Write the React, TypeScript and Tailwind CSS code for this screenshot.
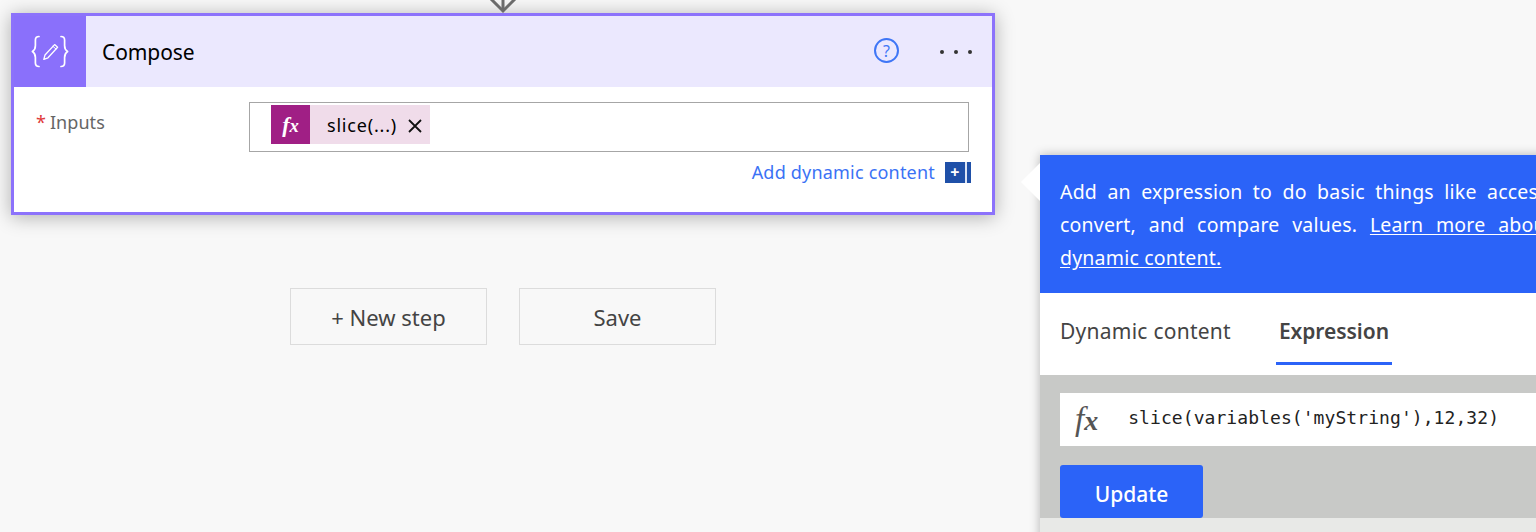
const sans = "font-['Noto_Sans','Open_Sans',sans-serif]";

const FxGlyph = ({ className }: { className: string }) => (
  <span className={`font-['Liberation_Serif',serif] italic leading-none ${className}`}>
    f<span className="text-[0.85em] font-bold">x</span>
  </span>
);

const ComposeIcon = () => (
  <svg width="38" height="33" viewBox="0 0 38 33" fill="none" stroke="white" strokeWidth="1.7" strokeLinecap="round" strokeLinejoin="round">
    <path d="M8 1.5c-3 0-3.6 1.3-3.6 3.4v5.6c0 2.6-.9 4.8-3 6 2.1 1.2 3 3.4 3 6v5.6c0 2.1.6 3.4 3.6 3.4" />
    <path d="M30 1.5c3 0 3.6 1.3 3.6 3.4v5.6c0 2.6.9 4.8 3 6-2.1 1.2-3 3.4-3 6v5.6c0 2.1-.6 3.4-3.6 3.4" />
    <path d="M23.6 9.6l3 2.6-9.6 10.6-4.2 1.6 1.2-4.4z" strokeWidth="1.3" />
    <path d="M22 11.4l3 2.6" strokeWidth="1" />
  </svg>
);

const ConnectorArrow = () => (
  <svg width="30" height="14" viewBox="0 0 30 14" fill="none" stroke="#6b6b6b" strokeWidth="3" className="absolute left-[488px] top-0">
    <path d="M15 -4v15" />
    <path d="M3 -1l12 12 12-12" />
  </svg>
);

const Card = () => (
  <div className="w-[984px] h-[202px] border-[3px] border-[#8c72fb] bg-white shadow-[0_2px_18px_rgba(0,0,0,0.3)]">
    <div className="h-[71px] bg-[#ebe8fe] flex items-center">
      <div className="w-[72px] h-full bg-[#8a70fb] flex items-center justify-center">
        <ComposeIcon />
      </div>
      <div className="ml-4 text-[21px] leading-[28px] text-black tracking-[-0.1px] flex-1">Compose</div>
      <div className="w-[25px] h-[25px] rounded-full border-2 border-[#3f76f6] text-[#3f76f6] text-[16px] leading-none flex items-center justify-center mr-[41px] mb-[2px]">
        ?
      </div>
      <div className="flex gap-[10px] mr-[20px]">
        <span className="w-[4px] h-[4px] rounded-full bg-[#333]" />
        <span className="w-[4px] h-[4px] rounded-full bg-[#333]" />
        <span className="w-[4px] h-[4px] rounded-full bg-[#333]" />
      </div>
    </div>
    <div className="flex pt-[15px] pl-[22px]">
      <div className="w-[213px] flex items-start text-[18px] leading-[24px] text-[#666] pt-[8px] tracking-[0.05px]">
        <span className="text-[#e03a3a] mr-[4px]">*</span>
        Inputs
      </div>
      <div className="w-[720px]">
        <div className="h-[50px] border border-[#a6a6a6] pl-[21px] pt-[2px]">
          <div className="inline-flex h-[39px] bg-[#f0dcea] items-center pr-[8px]">
            <div className="w-[39px] h-full bg-[#a01f85] flex items-center justify-center text-white">
              <FxGlyph className="text-[22px] font-bold" />
            </div>
            <span className="ml-[17px] text-[18px] text-black tracking-[0.8px] mt-[1px]">slice(...)</span>
            <svg width="14" height="14" viewBox="0 0 14 14" stroke="#111" strokeWidth="1.8" className="ml-[11px] mt-[2px]">
              <path d="M1 1l12 12M13 1L1 13" />
            </svg>
          </div>
        </div>
        <div className="flex justify-end items-center mt-[8px] mr-[-2px] text-[#3b72f5] text-[18px] tracking-[0.2px] leading-[24px]">
          Add dynamic content
          <div className="ml-[10px] flex h-[21px] bg-[#1f50a8]">
            <div className="w-[20px] flex items-center justify-center text-white text-[16px] font-bold leading-none">+</div>
            <div className="w-[2px] bg-[#dbe4f5]" />
            <div className="w-[4px]" />
          </div>
        </div>
      </div>
    </div>
  </div>
);

const StepButton = ({ label }: { label: string }) => (
  <button className="w-[197px] h-[57px] border border-[#dcdcdc] text-[#444] text-[22px] leading-[30px] flex items-center justify-center">
    {label}
  </button>
);

const ExpressionPanel = () => (
  <div className="absolute left-[1040px] top-[155px] w-[560px] h-[400px] bg-white shadow-[0_0_10px_rgba(0,0,0,0.28)]">
    <div className="absolute left-[-19px] top-[8px] w-0 h-0 border-y-[19px] border-y-transparent border-r-[19px] border-r-white" />
    <div className="h-[138px] bg-[#2b63f8] text-white text-[19.5px] tracking-[0.2px] leading-[33px] pl-[20px] pr-[47px] pt-[20px] text-justify">
      Add an expression to do basic things like access, convert, and compare values.{" "}
      <span className="underline underline-offset-2">Learn more about dynamic content.</span>
    </div>
    <div className="h-[82px] flex pl-[20px] text-[21px] tracking-[0.25px] text-[#444]">
      <div className="pt-[23px]">Dynamic content</div>
      <div className="ml-[45px] h-[72px] pt-[23px] px-[3px] font-semibold tracking-[-0.05px] border-b-[3px] border-[#2b63f8]">Expression</div>
    </div>
    <div className="h-[143px] bg-[#c8c9c7] pt-[18px] pl-[20px]">
      <div className="h-[53px] bg-white flex items-center pl-[15px]">
        <FxGlyph className="text-[33px] text-[#555]" />
        <span className="ml-[30px] font-['DejaVu_Sans_Mono',monospace] text-[18px] tracking-[0.07px] text-[#222] mb-[4px]">
          slice(variables('myString'),12,32)
        </span>
      </div>
      <button className="mt-[19px] w-[143px] h-[53px] rounded-[3px] bg-[#2b63f8] text-white text-[21px] font-medium pt-[6px] flex items-center justify-center">
        Update
      </button>
    </div>
    <div className="h-[37px] bg-[#e8e9e7]" />
  </div>
);

export default function App() {
  return (
    <div className={`relative h-[532px] overflow-hidden bg-[#f8f8f8] ${sans}`}>
      <ConnectorArrow />
      <div className="w-[995px] pl-[11px] pt-[13px]">
        <Card />
        <div className="flex justify-center gap-[32px] mt-[73px]">
          <StepButton label="+ New step" />
          <StepButton label="Save" />
        </div>
      </div>
      <ExpressionPanel />
    </div>
  );
}
